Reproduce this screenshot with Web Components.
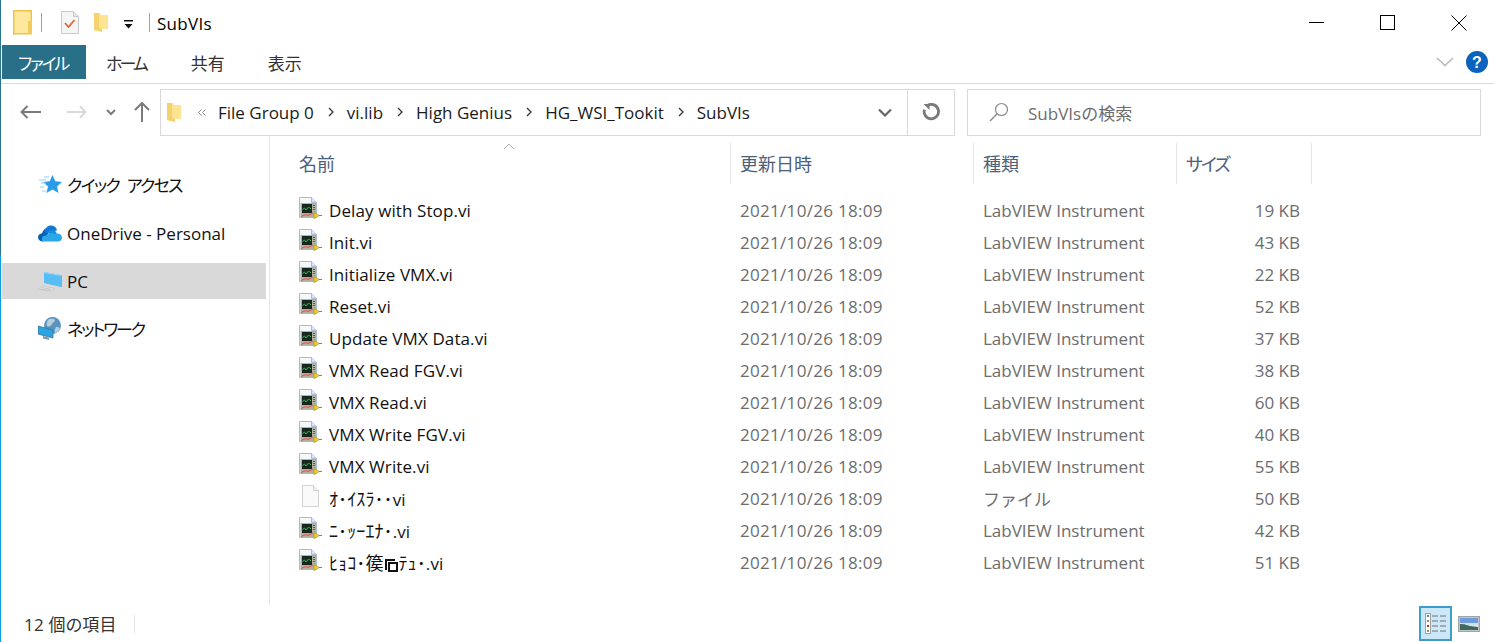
<!DOCTYPE html>
<html>
<head>
<meta charset="utf-8">
<title>SubVIs</title>
<style>
  html, body { margin: 0; height: 100%; background: #fff; overflow: hidden; }
  body { font-family: "Open Sans", "Noto Sans CJK JP", sans-serif; }
  .kana { font-size: 18px; letter-spacing: .1px; }
  .glitch { display: inline-block; vertical-align: -2px; margin: 0 1px; }
</style>
</head>
<body>
<fe-window>
  <fe-titlebar slot="top" title-text="SubVIs"></fe-titlebar>
  <fe-tabs slot="top">
    <fe-tab active kana>ファイル</fe-tab>
    <fe-tab kana style="--ls:-3px;padding-left:20px;padding-right:24px">ホーム</fe-tab>
    <fe-tab>共有</fe-tab>
    <fe-tab style="padding-left:22px">表示</fe-tab>
  </fe-tabs>
  <fe-address slot="top"></fe-address>
  <fe-sidebar slot="side">
    <fe-nav icon="quick" kana style="--ls:-1.7px;word-spacing:5px">クイック アクセス</fe-nav>
    <fe-nav icon="cloud">OneDrive - Personal</fe-nav>
    <fe-nav icon="pc" selected>PC</fe-nav>
    <fe-nav icon="net" kana style="--ls:-2.2px">ネットワーク</fe-nav>
  </fe-sidebar>
  <fe-list slot="main">
    <fe-row size="19 KB">Delay with Stop.vi</fe-row>
    <fe-row size="43 KB">Init.vi</fe-row>
    <fe-row size="22 KB">Initialize VMX.vi</fe-row>
    <fe-row size="52 KB">Reset.vi</fe-row>
    <fe-row size="37 KB">Update VMX Data.vi</fe-row>
    <fe-row size="38 KB">VMX Read FGV.vi</fe-row>
    <fe-row size="60 KB">VMX Read.vi</fe-row>
    <fe-row size="40 KB">VMX Write FGV.vi</fe-row>
    <fe-row size="55 KB">VMX Write.vi</fe-row>
    <fe-row type="ファイル" size="50 KB" plain><span class="kana">ｵ･ｲｽﾗ･･</span>vi</fe-row>
    <fe-row size="42 KB"><span class="kana">ﾆ･ｯｰｴﾅ･</span>.vi</fe-row>
    <fe-row size="51 KB"><span class="kana">ﾋｮｺ･篌</span><svg class="glitch" width="13" height="13" viewBox="0 0 13 13"><path d="M0 0h10v2H2v9H0z" fill="#111"/><rect x="4" y="4" width="8" height="8" fill="none" stroke="#111" stroke-width="2"/></svg><span class="kana">ﾃｭ･</span>.vi</fe-row>
  </fe-list>
  <fe-status slot="bottom">12 個の項目</fe-status>
</fe-window>

<script>
const FONT = `"Open Sans", "Noto Sans CJK JP", sans-serif`

const folderSmall = `<svg width="14" height="21" viewBox="0 0 14 21">
  <path d="M0 1h6l1 2h7v14H8v3l-8-2z" fill="#fde492"/><path d="M0 1h5v15l3 1v3l-8-2z" fill="#f6d26e"/></svg>`

const icons = {
  quick: `<svg width="24" height="24" viewBox="0 0 24 24">
    <path d="M14.500 2l2.800 6.300 6.700.6-5 4.500 1.500 6.600-6-3.500-6 3.500 1.500-6.600-5-4.500 6.700-.6z" fill="#2b9de8"/>
    <path d="M1 7h7M3 10h5M2 14h4M4 18h4M6 4h5" stroke="#8fd0f5" stroke-width="1.200"/></svg>`,
  cloud: `<svg width="24" height="18" viewBox="0 0 24 18">
    <path d="M5 17.500C2 17.500 0 15.700 0 13.300 0 11 1.800 9.400 4 9.200 5 5.800 7.500 4 10.300 4c1.200 0 2.300.3 3.200.9L8 13z" fill="#0a5fb4"/>
    <path d="M6 8C7.500 3.500 10 1.500 13 1.500c3 0 5.400 2 6 4.800 0 .3-3 1-3 1l-6 2z" fill="#0f78d4"/>
    <path d="M10 8c1-1.300 2.500-2 4-2 2.500 0 4.300 1.500 4.800 3.600L13 13z" fill="#1490df"/>
    <path d="M4 17.500h16c2.200 0 4-1.600 4-3.800 0-2.300-1.900-4.100-4.500-4.100-1 0-2 0-3 .6-1.700-1.300-5-1.300-7 .6-1 1-5 1-5.500 2.700z" fill="#28a8ea"/></svg>`,
  pc: `<svg width="24" height="24" viewBox="0 0 24 24">
    <path d="M6 3l17 3v12l-13-3-4-1z" fill="#58bdf5"/><path d="M6 3l17 3v1L6 4z" fill="#9ad8f8"/>
    <path d="M23 6l.8.2v12l-.8-.2z" fill="#8a98a6"/>
    <path d="M5 17l12 2.500-5 2.500L0 20z" fill="#e4e7e9" stroke="#bcc1c5" stroke-width=".6"/>
    <path d="M4 18.500l9 1.800M2.500 19.800l9 1.700" stroke="#b4babe" stroke-width=".7"/></svg>`,
  net: `<svg width="24" height="24" viewBox="0 0 24 24">
    <circle cx="14.500" cy="8.500" r="8.500" fill="#5a93bf"/>
    <path d="M10 3c3-2 6-1 7 0 0 2-2 2-3 4s-3 3-5 2c-1-2 0-4 1-6zM18 10c2 0 3 .5 4 1-1 3-3 4.500-5 5-1-2 0-4 1-6z" fill="#b5cfe0"/>
    <path d="M0 9l15 4v8L0 17z" fill="#29a4e6" stroke="#4a6c85" stroke-width=".8"/>
    <path d="M5 19l6 1.700v2.300l-6-1.600z" fill="#7f97a8"/></svg>`,
  vi: `<svg width="23" height="22" viewBox="0 0 23 22">
    <path d="M.5.500h12l5 5v15H.5z" fill="#f6f9fc" stroke="#a9bad0"/>
    <path d="M12.500.500v5h5" fill="#dbe6f2" stroke="#a9bad0"/>
    <rect x="1.500" y="6" width="15.500" height="14.500" fill="#b2b2a4"/>
    <rect x="3" y="7" width="10" height="9" fill="#16281f"/>
    <path d="M3.500 12.500l2-1.500 1.500 2 2.500-3 2.500 2" stroke="#3fb552" fill="none" stroke-width="1"/>
    <path d="M14 8.500h2M14 10.500h2M14 12.500h2" stroke="#5f6058"/>
    <path d="M2 19.500l5-2 2 1 5-2.500" stroke="#e2574c" fill="none" stroke-width="1.100"/>
    <path d="M15 15.500l5.500 3-5.500 3z" fill="#f2d22e" stroke="#8a7a14" stroke-width=".5"/>
    <path d="M20 18.500h3" stroke="#e2574c"/></svg>`,
  blank: `<svg width="17" height="22" viewBox="0 0 17 22">
    <path d="M.5.500h11l5 5v16H.5z" fill="#fafafa" stroke="#d3d3d3"/>
    <path d="M11.500.500v5h5" fill="#efefef" stroke="#d3d3d3"/></svg>`
}

class FeWindow extends HTMLElement {
  constructor() {
    super()
    this.attachShadow({mode: "open"}).innerHTML = `
      <style>
        :host { display: flex; flex-direction: column; width: 1494px; height: 642px; box-sizing: border-box;
          border-left: 1px solid; border-image: linear-gradient(#2a7490 0 255px, #0aa0dc 255px) 1; font-family: ${FONT}; color: #000; }
        .top { flex: none; }
        .mid { flex: 1; display: flex; min-height: 0; }
        .bottom { flex: none; }
      </style>
      <div class="top"><slot name="top"></slot></div>
      <div class="mid"><slot name="side"></slot><slot name="main"></slot></div>
      <div class="bottom"><slot name="bottom"></slot></div>`
  }
}

class FeTitlebar extends HTMLElement {
  constructor() {
    super()
    this.attachShadow({mode: "open"}).innerHTML = `
      <style>
        :host { display: flex; align-items: center; height: 45px; padding-left: 12px; }
        .sep { width: 1px; height: 19px; background: #a0a0a0; }
        .title { font-size: 17px; letter-spacing: .3px; margin-left: 7px; position: relative; top: 1px; }
        .win { margin-left: auto; display: flex; }
        .win div { width: 71px; height: 45px; display: flex; align-items: center; justify-content: center; }
        svg { display: block; flex: none; }
      </style>
      <svg width="20" height="25" viewBox="0 0 20 25" style="margin-right:8px">
        <rect x=".75" y=".75" width="17.500" height="23" fill="#fde89e" stroke="#eec44c" stroke-width="1.500"/>
        <path d="M15 11h4v13h-4z" fill="#f2cb5a"/></svg>
      <div class="sep"></div>
      <svg width="18" height="23" viewBox="0 0 18 23" style="margin-left:19px">
        <path d="M.5.500h12l5 5v17H.5z" fill="#f5f5f5" stroke="#c9c9c9"/>
        <path d="M12.500.500v5h5" fill="#e4e4e4" stroke="#c9c9c9"/>
        <path d="M4 12l3.500 4 6-7" fill="none" stroke="#e8622c" stroke-width="1.800"/></svg>
      <span style="margin-left:15px;display:flex;height:21px">${folderSmall}</span>
      <svg width="10" height="9" viewBox="0 0 10 9" style="margin-left:16px;margin-top:3px">
        <path d="M0 0h9v1.500H0z" fill="#111"/><path d="M.5 4h8L4.500 8.500z" fill="#111"/></svg>
      <div class="sep" style="margin-left:15px"></div>
      <span class="title"></span>
      <div class="win">
        <div><svg width="16" height="2"><path d="M0 .5h15" stroke="#000"/></svg></div>
        <div><svg width="15" height="15"><rect x=".5" y=".5" width="14" height="14" fill="none" stroke="#000"/></svg></div>
        <div><svg width="16" height="16"><path d="M.5.500l15 15M15.500.500l-15 15" stroke="#000" fill="none"/></svg></div>
      </div>`
    this.shadowRoot.querySelector(".title").textContent = this.getAttribute("title-text")
  }
}

class FeTabs extends HTMLElement {
  constructor() {
    super()
    this.attachShadow({mode: "open"}).innerHTML = `
      <style>
        :host { display: flex; align-items: flex-start; height: 38px; padding-left: 1px; border-bottom: 1px solid #dadada; }
        .right { margin-left: auto; display: flex; align-items: center; gap: 12px; height: 36px; padding-right: 6px; margin-top: -1px; }
        svg { display: block; }
      </style>
      <slot></slot>
      <div class="right">
        <svg width="18" height="10" viewBox="0 0 18 10"><path d="M1 1l8 7.500L17 1" fill="none" stroke="#b8b8b8" stroke-width="1.600"/></svg>
        <svg width="22" height="22" viewBox="0 0 22 22"><circle cx="11" cy="11" r="11" fill="#0b63bd"/>
          <text x="11" y="17" font-family="Liberation Sans, sans-serif" font-size="16" font-weight="700" fill="#fff" text-anchor="middle">?</text></svg>
      </div>`
  }
}

class FeTab extends HTMLElement {
  constructor() {
    super()
    this.attachShadow({mode: "open"}).innerHTML = `
      <style>
        :host { display: flex; align-items: center; height: 34px; padding: 0 21px; font-size: 17px;
          color: #333; font-feature-settings: "palt"; }
        :host([kana]) { letter-spacing: var(--ls, -2.2px); padding-right: 23px; }
        :host([active]) { background: #2a6f88; color: #fff; padding: 0 18px 0 16px; }
      </style>
      <slot></slot>`
  }
}

class FeAddress extends HTMLElement {
  constructor() {
    super()
    const crumbs = ["File Group 0", "vi.lib", "High Genius", "HG_WSI_Tookit", "SubVIs"]
    this.attachShadow({mode: "open"}).innerHTML = `
      <style>
        :host { display: flex; align-items: center; height: 48px; margin-top: 4px; padding-right: 13px; }
        svg { display: block; flex: none; }
        .nav { width: 159px; flex: none; display: flex; align-items: center; padding-left: 19px; box-sizing: border-box; }
        .box { height: 47px; box-sizing: border-box; border: 1px solid #d9d9d9; display: flex; align-items: center; }
        .path { width: 795px; flex: none; padding-left: 6px; }
        .crumbs { display: flex; align-items: center; font-size: 17px; color: #1a1a1a; margin-left: 12px; }
        .crumbs svg { margin: 0 13px 0 14px; }
        .drop { margin-left: auto; display: flex; align-items: center; justify-content: center; width: 44px; height: 100%; }
        .reload { width: 46px; height: 100%; border-left: 1px solid #d9d9d9; display: flex; align-items: center; justify-content: center; }
        .search { flex: 1; margin-left: 12px; padding-left: 21px; font-size: 17px; color: #6d6d6d; }
        .search span { margin-left: 19px; }
      </style>
      <div class="nav">
        <svg width="21" height="14" viewBox="0 0 21 14"><path d="M7.500 1L1.500 7l6 6M2 7h19" fill="none" stroke="#7a7a7a" stroke-width="2"/></svg>
        <svg width="20" height="14" viewBox="0 0 21 14" style="margin-left:26px"><path d="M13.500 1l6 6-6 6M19 7H0" fill="none" stroke="#d9d9d9" stroke-width="2"/></svg>
        <svg width="10" height="7" viewBox="0 0 10 7" style="margin-left:19px"><path d="M1 1l4 4 4-4" fill="none" stroke="#7a7a7a" stroke-width="2"/></svg>
        <svg width="16" height="20" viewBox="0 0 16 20" style="margin-left:18px"><path d="M1 8l7-7 7 7M8 1.500V20" fill="none" stroke="#7a7a7a" stroke-width="2"/></svg>
      </div>
      <div class="box path">
        ${folderSmall}
        <svg width="8" height="7" viewBox="0 0 8 7" style="margin-left:17px"><path d="M3.500.500L.5 3.500l3 3M7.500.500l-3 3 3 3" fill="none" stroke="#8a8a8a"/></svg>
        <div class="crumbs">
          ${crumbs.map((c, i) => `<span>${c}</span>` + (i < crumbs.length - 1
            ? `<svg width="6" height="10" viewBox="0 0 6 10"><path d="M1 1l4 4-4 4" fill="none" stroke="#333" stroke-width="1.300"/></svg>` : "")).join("")}
        </div>
        <div class="drop"><svg width="14" height="9" viewBox="0 0 14 9"><path d="M1 1.500l6 6 6-6" fill="none" stroke="#666" stroke-width="2.200"/></svg></div>
        <div class="reload"><svg width="18" height="18" viewBox="0 0 18 18"><path d="M4 3.500A7.200 7.200 0 1 1 2 9" transform="rotate(20 9 9)" fill="none" stroke="#7a7a7a" stroke-width="2.800"/><path d="M1.500 1h6v6z" fill="#7a7a7a"/></svg></div>
      </div>
      <div class="box search">
        <svg width="20" height="20" viewBox="0 0 20 20"><circle cx="12.500" cy="7.500" r="6" fill="none" stroke="#8a8a8a" stroke-width="1.200"/><path d="M8.200 11.800L1 19" stroke="#8a8a8a" stroke-width="1.400"/></svg>
        <span>SubVIsの検索</span>
      </div>`
  }
}

class FeSidebar extends HTMLElement {
  constructor() {
    super()
    this.attachShadow({mode: "open"}).innerHTML = `
      <style>
        :host { display: flex; flex-direction: column; gap: 12px; width: 269px; flex: none; box-sizing: border-box;
          border-right: 1px solid #e5e5e5; padding: 31px 3px 0 1px; }
      </style>
      <slot></slot>`
  }
}

class FeNav extends HTMLElement {
  constructor() {
    super()
    this.attachShadow({mode: "open"}).innerHTML = `
      <style>
        :host { display: flex; align-items: center; height: 36px; font-size: 17px; font-feature-settings: "palt"; color: #111; }
        :host([kana]) { letter-spacing: var(--ls, -1.5px); padding-bottom: 1px; height: 35px; }
        :host([selected]) { background: #d9d9d9; }
        .ic { width: 24px; display: flex; justify-content: center; margin: 0 5px 0 36px; letter-spacing: 0; }
      </style>
      <span class="ic">${icons[this.getAttribute("icon")]}</span><span style="white-space:pre"><slot></slot></span>`
  }
}

class FeList extends HTMLElement {
  constructor() {
    super()
    this.attachShadow({mode: "open"}).innerHTML = `
      <style>
        :host { display: block; flex: 1; padding-left: 20px; }
        .head { display: grid; grid-template-columns: 441px 243px 203px 135px; height: 51px; padding-top: 7px; font-size: 18px; color: #4c607a; font-feature-settings: "palt"; }
        .head div { display: flex; align-items: center; padding: 0 0 2px 9px; border-right: 1px solid #e5e5e5; position: relative; height: 39px; }
        .caret { position: absolute; left: 213px; top: 0; display: block; }
        .tight { letter-spacing: -2px; }
      </style>
      <div class="head">
        <div>名前<svg class="caret" width="12" height="7" viewBox="0 0 12 7"><path d="M1 6l5-5 5 5" fill="none" stroke="#b0b0b0"/></svg></div>
        <div>更新日時</div><div>種類</div><div class="tight">サイズ</div>
      </div>
      <slot></slot>`
  }
}

class FeRow extends HTMLElement {
  constructor() {
    super()
    const plain = this.hasAttribute("plain")
    this.attachShadow({mode: "open"}).innerHTML = `
      <style>
        :host { display: grid; grid-template-columns: 441px 243px 203px 135px; height: 32px; align-items: center; font-size: 17px; color: #6d6d6d; }
        .name { display: flex; align-items: center; color: #111; padding-left: 9px; letter-spacing: .1px; }
        .ic { width: 23px; display: flex; justify-content: ${plain ? "center" : "flex-start"}; margin-right: 7px; position: relative; top: -2px; }
        .date { padding-left: 9px; letter-spacing: .3px; }
        .type { padding-left: 9px; }
        .size { text-align: right; padding-right: 12px; }
      </style>
      <div class="name"><span class="ic">${plain ? icons.blank : icons.vi}</span><span><slot></slot></span></div>
      <div class="date">2021/10/26 18:09</div>
      <div class="type"></div>
      <div class="size"></div>`
    this.shadowRoot.querySelector(".type").textContent = this.getAttribute("type") || "LabVIEW Instrument"
    this.shadowRoot.querySelector(".size").textContent = this.getAttribute("size")
  }
}

class FeStatus extends HTMLElement {
  constructor() {
    super()
    this.attachShadow({mode: "open"}).innerHTML = `
      <style>
        :host { display: flex; align-items: center; height: 37px; padding-left: 23px; font-size: 17px; letter-spacing: .2px; color: #333; font-feature-settings: "palt"; }
        .sep { width: 1px; height: 18px; background: #e5e5e5; margin-left: 17px; }
        .views { margin-left: auto; display: flex; align-items: center; gap: 6px; padding-right: 14px; }
        .on { width: 33px; height: 35px; box-sizing: border-box; background: #cce8f8; border: 2px solid #3d9dd0; display: flex; align-items: center; justify-content: center; }
        svg { display: block; }
      </style>
      <slot></slot><div class="sep"></div>
      <div class="views">
        <div class="on"><svg width="21" height="21" viewBox="0 0 21 21">
          <rect x=".5" y=".5" width="5" height="20" fill="#fff" stroke="#a0a0a0"/>
          <rect x="2" y="2" width="2" height="2" fill="#3a8a9a"/><rect x="2" y="7" width="2" height="2" fill="#a88a50"/>
          <rect x="2" y="12" width="2" height="2" fill="#c03020"/><rect x="2" y="17" width="2" height="2" fill="#80a050"/>
          <path d="M7 3h6M15 3h6M7 8h6M15 8h6M7 13h6M15 13h6M7 18h6M15 18h6" stroke="#707070"/></svg></div>
        <svg width="22" height="16" viewBox="0 0 22 16">
          <rect x=".75" y=".75" width="20.500" height="14.500" fill="#dfe9f5" stroke="#a4a4a4" stroke-width="1.500"/>
          <rect x="2" y="2" width="18" height="5" fill="#6f9be0"/><path d="M2 7h18v2l-8 1z" fill="#cfe0ef"/>
          <path d="M2 8c5 0 7 1 10 2l8 1v3H2z" fill="#3f6a5a"/></svg>
      </div>`
  }
}

customElements.define("fe-window", FeWindow)
customElements.define("fe-titlebar", FeTitlebar)
customElements.define("fe-tabs", FeTabs)
customElements.define("fe-tab", FeTab)
customElements.define("fe-address", FeAddress)
customElements.define("fe-sidebar", FeSidebar)
customElements.define("fe-nav", FeNav)
customElements.define("fe-list", FeList)
customElements.define("fe-row", FeRow)
customElements.define("fe-status", FeStatus)
</script>
</body>
</html>
